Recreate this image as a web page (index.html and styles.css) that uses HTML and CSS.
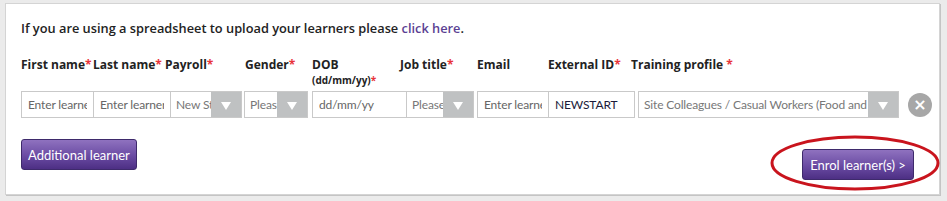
FILE: index.html
```html
<!DOCTYPE html>
<html lang="en">
  <head>
    <meta charset="UTF-8" />
    <meta name="viewport" content="width=device-width, initial-scale=1.0" />
    <title>Enrol Learners</title>
    <link rel="stylesheet" href="styles.css">
  </head>
  <body>
    <div class="panel">
      <p class="intro">
        If you are using a spreadsheet to upload your learners please
        <a href="#">click here</a>.
      </p>

      <div class="labels">
        <span class="col-first">First name<i>*</i></span>
        <span class="col-last">Last name<i>*</i></span>
        <span class="col-payroll">Payroll<i>*</i></span>
        <span class="col-gender">Gender<i>*</i></span>
        <span class="col-dob">DOB<small>(dd/mm/yy)<i>*</i></small></span>
        <span class="col-job">Job title<i>*</i></span>
        <span class="col-email">Email</span>
        <span class="col-ext">External ID<i>*</i></span>
        <span class="col-profile">Training profile <i>*</i></span>
      </div>

      <div class="learnerRow">
        <input type="text" class="field f-first" placeholder="Enter learner's first name" />
        <input type="text" class="field f-last joined" placeholder="Enter learner's last name" />
        <div class="select f-payroll joined">
          <span>New Starter</span><b class="arrow"></b>
        </div>
        <div class="select f-gender">
          <span>Please select</span><b class="arrow"></b>
        </div>
        <input type="text" class="field f-dob" placeholder="dd/mm/yy" />
        <div class="select f-job joined">
          <span>Please select</span><b class="arrow"></b>
        </div>
        <input type="text" class="field f-email" placeholder="Enter learner's email" />
        <input type="text" class="field f-ext joined" value="NEWSTART" />
        <div class="select f-profile">
          <span>Site Colleagues / Casual Workers (Food and Beverage)</span><b class="arrow"></b>
        </div>
        <button class="remove" title="Remove">&times;</button>
      </div>

      <div class="actions">
        <button class="purple-button">Additional learner</button>
        <div class="enrol">
          <button class="purple-button">Enrol learner(s) &gt;</button>
          <svg class="highlight" width="175" height="60" viewBox="0 0 175 60">
            <ellipse cx="86" cy="29" rx="83" ry="26" fill="none" stroke="#c9141d" stroke-width="3" />
          </svg>
        </div>
      </div>
    </div>
  </body>
</html>
```

FILE: styles.css
```css
body {
  background-color: #ebebeb;
  margin: 0;
  padding: 3px 5px;
  font-family: "Open Sans", "DejaVu Sans", sans-serif;
  color: #222;
}

.panel {
  width: 935px;
  height: 192px;
  background-color: #fff;
  border: 1px solid #d4d4d4;
  box-shadow: 1px 1px 0 #c4c4c4;
  padding: 0 25px 0 15px;
  box-sizing: border-box;
}

.intro {
  margin: 0;
  padding-top: 15px;
  font-size: 12.8px;
  font-weight: 600;
}

.intro a {
  color: #5b3f93;
  text-decoration: none;
}

.labels {
  display: flex;
  margin-top: 19px;
  height: 30px;
  font-size: 12px;
  font-weight: 700;
}

.labels span {
  flex: none;
  white-space: nowrap;
}

.labels i {
  font-style: normal;
  color: #e8343a;
}

.labels small {
  display: block;
  font-size: 10px;
  line-height: 14px;
}

.col-first { width: 72px; }
.col-last { width: 72px; }
.col-payroll { width: 80px; }
.col-gender { width: 67px; }
.col-dob { width: 88px; }
.col-job { width: 77px; }
.col-email { width: 71px; }
.col-ext { width: 83px; }

.learnerRow {
  display: flex;
  align-items: center;
  margin-top: 5px;
}

.field,
.select {
  flex: none;
  height: 27px;
  box-sizing: border-box;
  border: 1px solid #c9c9c9;
  background-color: #fff;
  font-family: "Lato", "Open Sans", sans-serif;
  font-size: 12px;
  letter-spacing: -0.15px;
  color: #555;
  padding: 0 6px;
  margin: 0;
  border-radius: 0;
  outline: none;
}

.field::placeholder {
  color: #666;
}

.joined {
  margin-left: -1px;
}

.select {
  display: flex;
  align-items: center;
  padding: 0 0 0 5px;
  overflow: hidden;
}

.select span {
  flex: 1;
  white-space: nowrap;
  overflow: hidden;
  color: #777;
}

.select .arrow {
  flex: none;
  width: 30px;
  height: 100%;
  background-color: #bfc1c2;
  position: relative;
}

.select .arrow::after {
  content: "";
  position: absolute;
  left: 10px;
  top: 10px;
  border-left: 5px solid transparent;
  border-right: 5px solid transparent;
  border-top: 8px solid #fff;
}

.f-first { width: 73px; }
.f-last { width: 78px; }
.f-payroll { width: 72px; }
.f-gender { width: 64px; margin-left: 2px; }
.f-dob { width: 95px; margin-left: 4px; }
.f-job { width: 68px; }
.f-email { width: 72px; margin-left: 3px; }
.f-ext { width: 87px; color: #1b1b3a; }
.f-profile { width: 261px; margin-left: 3px; }

.remove {
  flex: none;
  width: 24px;
  height: 24px;
  margin-left: 9px;
  border: none;
  border-radius: 50%;
  background-color: #a7a7a7;
  color: #fff;
  font-size: 16px;
  font-weight: bold;
  line-height: 24px;
  padding: 0;
  font-family: "DejaVu Sans", sans-serif;
}

.actions {
  display: flex;
  justify-content: space-between;
  align-items: flex-start;
  margin-top: 21px;
}

.purple-button {
  height: 31px;
  padding: 0 6px;
  border: 1px solid #3e2a6b;
  border-radius: 3px;
  background: linear-gradient(#8f72bf, #6a4ba3 55%, #4d2f84);
  color: #fff;
  font-family: "Lato", "Open Sans", sans-serif;
  font-size: 13px;
  white-space: nowrap;
  cursor: pointer;
}

.enrol {
  position: relative;
  margin-top: 10px;
}

.enrol .purple-button {
  width: 112px;
  padding: 0;
}

.highlight {
  position: absolute;
  left: -33px;
  top: -15px;
  overflow: visible;
  pointer-events: none;
}
```
